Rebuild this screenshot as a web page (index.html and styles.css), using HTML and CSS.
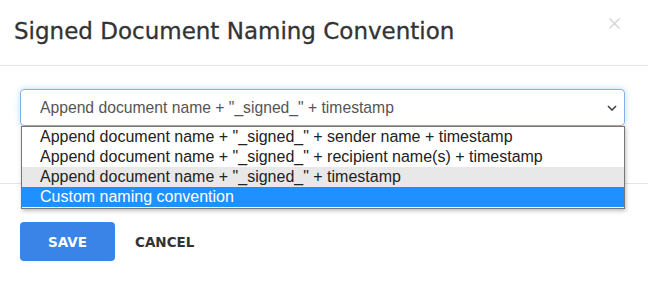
FILE: index.html
```html
<!DOCTYPE html>
<html lang="en">
<head>
    <meta charset="UTF-8">
    <title>Signed Document Naming Convention</title>
    <link rel="stylesheet" href="styles.css">
</head>
<body>
    <div class="modal">
        <!-- Header -->
        <div class="modal-header">
            <h2>Signed Document Naming Convention</h2>
            <svg class="close" width="11" height="11" viewBox="0 0 11 11">
                <path d="M0.5 0.5 L10.5 10.5 M10.5 0.5 L0.5 10.5" stroke="#d2d2d2" stroke-width="1.3"/>
            </svg>
        </div>
        <!-- Body with the open select -->
        <div class="modal-body">
            <div class="select-wrap">
                <div class="select">
                    <span>Append document name + "_signed_" + timestamp</span>
                    <svg class="chevron" width="10" height="6" viewBox="0 0 10 6">
                        <path d="M1 1 L5 5 L9 1" fill="none" stroke="#444" stroke-width="1.6"/>
                    </svg>
                </div>
                <ul class="dropdown">
                    <li>Append document name + "_signed_" + sender name + timestamp</li>
                    <li>Append document name + "_signed_" + recipient name(s) + timestamp</li>
                    <li class="current">Append document name + "_signed_" + timestamp</li>
                    <li class="hover">Custom naming convention</li>
                </ul>
            </div>
        </div>
        <!-- Footer -->
        <div class="modal-footer">
            <button class="btn-save">SAVE</button>
            <button class="btn-cancel">CANCEL</button>
        </div>
    </div>
</body>
</html>
```

FILE: styles.css
```css
* {
    margin: 0;
    padding: 0;
    box-sizing: border-box;
}
body {
    background: #fff;
    font-family: "DejaVu Sans", sans-serif;
    color: #333;
    width: 648px;
    height: 282px;
    overflow: hidden;
}
/* Header */
.modal-header {
    height: 66px;
    display: flex;
    align-items: flex-start;
    justify-content: space-between;
    padding: 18px 28px 0 14px;
    border-bottom: 1px solid #e5e5e5;
}
.modal-header h2 {
    font-size: 23px;
    line-height: 27px;
    font-weight: 400;
    color: #333;
    -webkit-text-stroke: 0.3px #333;
}
.close {
    margin-top: 0;
}
/* Body */
.modal-body {
    height: 117px;
    padding: 23px 23px 0 20px;
}
.select-wrap {
    position: relative;
}
.select {
    height: 37px;
    border: 1px solid #7fb3ea;
    border-radius: 4px;
    box-shadow: 0 0 6px rgba(102, 175, 233, 0.45);
    display: flex;
    align-items: center;
    justify-content: space-between;
    padding: 0 7px 0 19px;
    font-family: "Liberation Sans", Arial, sans-serif;
    font-size: 15.7px;
    color: #555;
}
.chevron {
    margin-top: 1px;
}
/* Native dropdown popup, drawn over the page */
.dropdown {
    position: absolute;
    top: 37px;
    left: 1px;
    right: 0;
    list-style: none;
    background: #fff;
    border: 1px solid #767676;
    box-shadow: 1px 2px 4px rgba(0, 0, 0, 0.25);
    font-family: "Liberation Sans", Arial, sans-serif;
    font-size: 16px;
    color: #222;
    padding-bottom: 1px;
}
.dropdown li {
    height: 20px;
    line-height: 19px;
    padding-left: 18px;
    white-space: nowrap;
}
.dropdown li.current {
    background: #e8e8e8;
}
.dropdown li.hover {
    background: #1e90ff;
    color: #fff;
}
/* Footer */
.modal-footer {
    border-top: 1px solid #e5e5e5;
    padding: 38px 20px 20px;
    display: flex;
    align-items: center;
    gap: 20px;
}
.btn-save {
    width: 95px;
    height: 39px;
    border: none;
    border-radius: 4px;
    background: #3a84e8;
    color: #fff;
    font-family: "DejaVu Sans", sans-serif;
    font-size: 13.5px;
    font-weight: 700;
}
.btn-cancel {
    border: none;
    background: none;
    color: #333;
    font-family: "DejaVu Sans", sans-serif;
    font-size: 13.5px;
    font-weight: 700;
}
```
